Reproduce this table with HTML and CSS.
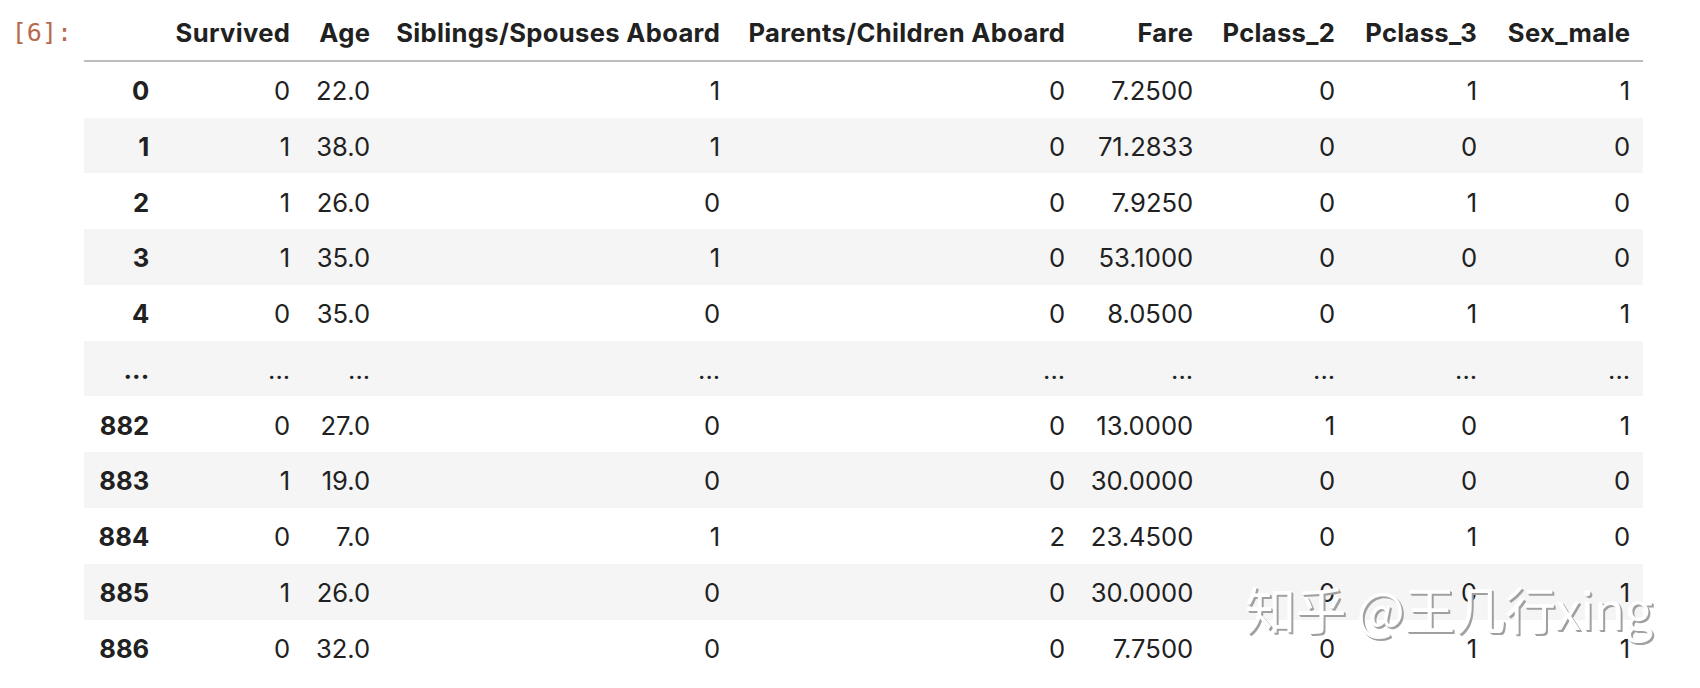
FILE: index.html
```html
<!DOCTYPE html>
<html lang="en">
<head>
<meta charset="utf-8">
<title>DataFrame output</title>
<link rel="stylesheet" href="styles.css">
</head>
<body>
<div class="cell">
  <div class="prompt">[6]:</div>
  <div class="output">
    <table class="dataframe">
      <colgroup>
        <col class="c-idx"><col class="c-surv"><col class="c-age"><col class="c-sib"><col class="c-par"><col class="c-fare"><col class="c-p2"><col class="c-p3"><col class="c-sex">
      </colgroup>
      <thead>
        <tr><th></th><th>Survived</th><th>Age</th><th>Siblings/Spouses Aboard</th><th>Parents/Children Aboard</th><th>Fare</th><th>Pclass_2</th><th>Pclass_3</th><th>Sex_male</th></tr>
      </thead>
      <tbody>
        <tr><th>0</th><td>0</td><td>22.0</td><td>1</td><td>0</td><td>7.2500</td><td>0</td><td>1</td><td>1</td></tr>
        <tr><th>1</th><td>1</td><td>38.0</td><td>1</td><td>0</td><td>71.2833</td><td>0</td><td>0</td><td>0</td></tr>
        <tr><th>2</th><td>1</td><td>26.0</td><td>0</td><td>0</td><td>7.9250</td><td>0</td><td>1</td><td>0</td></tr>
        <tr><th>3</th><td>1</td><td>35.0</td><td>1</td><td>0</td><td>53.1000</td><td>0</td><td>0</td><td>0</td></tr>
        <tr><th>4</th><td>0</td><td>35.0</td><td>0</td><td>0</td><td>8.0500</td><td>0</td><td>1</td><td>1</td></tr>
        <tr><th>...</th><td>...</td><td>...</td><td>...</td><td>...</td><td>...</td><td>...</td><td>...</td><td>...</td></tr>
        <tr><th>882</th><td>0</td><td>27.0</td><td>0</td><td>0</td><td>13.0000</td><td>1</td><td>0</td><td>1</td></tr>
        <tr><th>883</th><td>1</td><td>19.0</td><td>0</td><td>0</td><td>30.0000</td><td>0</td><td>0</td><td>0</td></tr>
        <tr><th>884</th><td>0</td><td>7.0</td><td>1</td><td>2</td><td>23.4500</td><td>0</td><td>1</td><td>0</td></tr>
        <tr><th>885</th><td>1</td><td>26.0</td><td>0</td><td>0</td><td>30.0000</td><td>0</td><td>0</td><td>1</td></tr>
        <tr><th>886</th><td>0</td><td>32.0</td><td>0</td><td>0</td><td>7.7500</td><td>0</td><td>1</td><td>1</td></tr>
      </tbody>
    </table>
  </div>
</div>
<div class="watermark">知乎 @王几行xing</div>
</body>
</html>
```
FILE: styles.css
```css
html, body {
  margin: 0;
  padding: 0;
  background: #ffffff;
}
body {
  position: relative;
  width: 1700px;
  height: 688px;
  overflow: hidden;
  font-family: Inter, "Noto Sans", "Liberation Sans", sans-serif;
  color: #212121;
}
.cell {
  display: flex;
  align-items: flex-start;
  padding-top: 4px;
}
.prompt {
  width: 72px;
  padding-right: 12px;
  text-align: right;
  font-family: "DejaVu Sans Mono", "Liberation Mono", monospace;
  font-size: 25px;
  line-height: 58px;
  color: #b8684c;
  flex: none;
}
.output {
  flex: none;
}
.dataframe {
  border-collapse: collapse;
  border-spacing: 0;
  table-layout: fixed;
  width: 1559px;
  font-size: 25.6px;
  line-height: 30.2px;
}
.c-idx { width: 78px; }
.c-surv { width: 141px; }
.c-age { width: 80px; }
.c-sib { width: 350px; }
.c-par { width: 345px; }
.c-fare { width: 128px; }
.c-p2 { width: 142px; }
.c-p3 { width: 142px; }
.c-sex { width: 153px; }
.dataframe th,
.dataframe td {
  padding: 14.2px 12.8px 11.4px;
  text-align: right;
  white-space: nowrap;
  vertical-align: middle;
}
.dataframe th {
  font-weight: 700;
}
.dataframe thead th {
  letter-spacing: 0.32px;
}
.dataframe td {
  font-weight: 400;
}
.dataframe thead {
  border-bottom: 2px solid #bdbdbd;
}
.dataframe tbody tr:nth-child(even) {
  background: #f5f5f5;
}
.watermark {
  position: absolute;
  left: 1245px;
  top: 578px;
  font-family: "Noto Sans CJK SC", "Noto Sans", sans-serif;
  font-size: 51px;
  line-height: 60px;
  color: #ffffff;
  text-shadow: 2px 2px 0 #a0a0a0, 1px 1px 0 #b4b4b4;
  white-space: nowrap;
  letter-spacing: -0.6px;
}
```
